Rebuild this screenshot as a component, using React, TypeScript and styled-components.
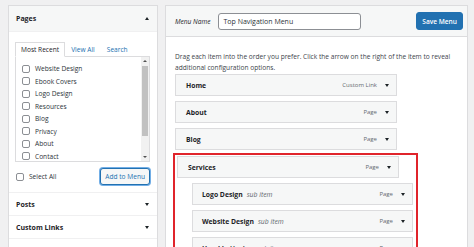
import styled, { createGlobalStyle } from 'styled-components';

const GlobalStyle = createGlobalStyle`
  html, body {
    margin: 0;
    padding: 0;
    background: #f0f0f1;
    font-family: "Open Sans", "Noto Sans", sans-serif;
    color: #1d2327;
  }
  * { box-sizing: border-box; }
`;

const Page = styled.div`
  display: flex;
  gap: 7px;
  padding: 5px 6px 0 8px;
  height: 247px;
  overflow: hidden;
`;

const LeftPanel = styled.div`
  width: 150px;
  flex-shrink: 0;
  background: #fff;
  border: 1px solid #dcdcde;
  border-bottom: none;
`;

const Accordion = styled.div<{ $open?: boolean }>`
  display: flex;
  align-items: center;
  justify-content: space-between;
  height: ${({ $open }) => ($open ? '26px' : '23px')};
  padding: 0 8px 0 7px;
  background: ${({ $open }) => ($open ? '#f6f7f7' : '#fff')};
  border-bottom: 1px solid #f0f0f1;
  font-size: 7px;
  font-weight: 700;
`;

const Caret = styled.span<{ $up?: boolean }>`
  width: 0;
  height: 0;
  border-left: 2.5px solid transparent;
  border-right: 2.5px solid transparent;
  ${({ $up }) =>
    $up ? 'border-bottom: 3px solid #1d2327;' : 'border-top: 3px solid #1d2327;'}
`;

const PagesBody = styled.div`
  padding: 10px 7px 7px 6px;
  border-bottom: 1px solid #f0f0f1;
`;

const Tabs = styled.div`
  display: flex;
  align-items: flex-end;
  height: 15px;
  position: relative;
  z-index: 1;
  margin-bottom: -1px;
`;

const Tab = styled.div<{ $active?: boolean }>`
  height: 15px;
  display: flex;
  align-items: center;
  padding: 0 5px 0 5px;
  font-size: 6.6px;
  color: ${({ $active }) => ($active ? '#1d2327' : '#2271b1')};
  background: ${({ $active }) => ($active ? '#fff' : 'transparent')};
  border: 1px solid ${({ $active }) => ($active ? '#dcdcde' : 'transparent')};
  border-bottom-color: ${({ $active }) => ($active ? '#fff' : 'transparent')};
`;

const ListBox = styled.div`
  display: flex;
  height: 106px;
  border: 1px solid #dcdcde;
`;

const List = styled.div`
  flex: 1;
  padding: 7px 0 0 6px;
  display: flex;
  flex-direction: column;
  gap: 2.7px;
`;

const Check = styled.label`
  display: flex;
  align-items: center;
  gap: 5px;
  height: 10px;
  font-size: 6.6px;
  color: #2c3338;
`;

const Box = styled.span`
  width: 8px;
  height: 8px;
  border: 1px solid #8c8f94;
  border-radius: 2px;
  background: #fff;
  flex-shrink: 0;
`;

const Scrollbar = styled.div`
  width: 8px;
  display: flex;
  flex-direction: column;
  align-items: center;
  background: #f1f1f1;
  padding: 3px 0;
`;

const Arrow = styled.span<{ $up?: boolean }>`
  width: 0;
  height: 0;
  border-left: 2px solid transparent;
  border-right: 2px solid transparent;
  ${({ $up }) =>
    $up ? 'border-bottom: 2px solid #505050;' : 'border-top: 2px solid #505050;'}
`;

const Thumb = styled.div`
  width: 6px;
  height: 70px;
  margin: 4px 0 auto;
  background: #c1c1c1;
`;

const ActionRow = styled.div`
  display: flex;
  align-items: center;
  justify-content: space-between;
  margin-top: 6px;
  padding-left: 1px;
`;

const SecondaryButton = styled.button`
  height: 17px;
  padding: 0 4px;
  font-family: inherit;
  font-size: 6.6px;
  color: #2271b1;
  background: #f6f7f7;
  border: 1px solid #2271b1;
  border-radius: 3px;
  box-shadow: 0 0 0 1px #72aee6;
`;

const RightPanel = styled.div`
  flex: 1;
  background: #fff;
  border: 1px solid #dcdcde;
  border-bottom: none;
`;

const MenuHeader = styled.div`
  height: 31px;
  display: flex;
  align-items: center;
  padding: 0 4px 0 9px;
  background: #f6f7f7;
  border-bottom: 1px solid #dcdcde;
`;

const FieldLabel = styled.span`
  font-size: 6.6px;
  font-style: italic;
  margin-right: 7px;
`;

const TextInput = styled.div`
  width: 143px;
  height: 17px;
  display: flex;
  align-items: center;
  padding: 0 5px;
  font-size: 7px;
  color: #2c3338;
  background: #fff;
  border: 1px solid #8c8f94;
  border-radius: 3px;
`;

const PrimaryButton = styled.button`
  margin-left: auto;
  height: 18px;
  padding: 0 5px;
  font-family: inherit;
  font-size: 6.6px;
  font-weight: 600;
  color: #fff;
  background: #2271b1;
  border: 1px solid #2271b1;
  border-radius: 3px;
`;

const MenuBody = styled.div`
  padding: 14px 8px 0 9px;
`;

const Help = styled.p`
  margin: 0 0 1px;
  font-size: 6.6px;
  line-height: 11px;
  color: #3c434a;
`;

const Items = styled.div`
  display: flex;
  flex-direction: column;
  gap: 5px;
`;

const Item = styled.div<{ $sub?: boolean }>`
  display: flex;
  align-items: center;
  width: ${({ $sub }) => ($sub ? '221px' : '222px')};
  height: 22px;
  flex-shrink: 0;
  margin-left: ${({ $sub }) => ($sub ? '15px' : '0')};
  padding: 0 7px 0 ${({ $sub }) => ($sub ? '9px' : '10px')};
  background: #f6f7f7;
  border: 1px solid #dcdcde;
  font-size: 6.8px;
`;

const Title = styled.span`
  font-weight: 700;
  color: #1d2327;
`;

const SubNote = styled.span`
  margin-left: 4px;
  font-style: italic;
  color: #646970;
`;

const Kind = styled.span`
  margin-left: auto;
  margin-right: 8px;
  font-size: 6px;
  color: #646970;
`;

const Highlight = styled.div`
  display: flex;
  flex-direction: column;
  gap: 5px;
  width: 245px;
  margin: -2px 0 0 -2px;
  padding: 1px 0 8px 2px;
  border: 2px solid #e0242b;
  border-bottom: none;
`;

type MenuItemProps = { title: string; kind: string; sub?: boolean };

function MenuItem({ title, kind, sub }: MenuItemProps) {
  return (
    <Item $sub={sub}>
      <Title>{title}</Title>
      {sub && <SubNote>sub item</SubNote>}
      <Kind>{kind}</Kind>
      <Caret />
    </Item>
  );
}

const pages = [
  'Website Design',
  'Ebook Covers',
  'Logo Design',
  'Resources',
  'Blog',
  'Privacy',
  'About',
  'Contact',
];

export default function App() {
  return (
    <>
      <GlobalStyle />
      <Page>
        <LeftPanel>
          <Accordion $open>
            Pages
            <Caret $up />
          </Accordion>
          <PagesBody>
            <Tabs>
              <Tab $active>Most Recent</Tab>
              <Tab>View All</Tab>
              <Tab>Search</Tab>
            </Tabs>
            <ListBox>
              <List>
                {pages.map((p) => (
                  <Check key={p}>
                    <Box />
                    {p}
                  </Check>
                ))}
              </List>
              <Scrollbar>
                <Arrow $up />
                <Thumb />
                <Arrow />
              </Scrollbar>
            </ListBox>
            <ActionRow>
              <Check>
                <Box />
                Select All
              </Check>
              <SecondaryButton>Add to Menu</SecondaryButton>
            </ActionRow>
          </PagesBody>
          <Accordion>
            Posts
            <Caret />
          </Accordion>
          <Accordion>
            Custom Links
            <Caret />
          </Accordion>
        </LeftPanel>
        <RightPanel>
          <MenuHeader>
            <FieldLabel>Menu Name</FieldLabel>
            <TextInput>Top Navigation Menu</TextInput>
            <PrimaryButton>Save Menu</PrimaryButton>
          </MenuHeader>
          <MenuBody>
            <Help>
              Drag each item into the order you prefer. Click the arrow on the right of the item to reveal
              <br />
              additional configuration options.
            </Help>
            <Items>
              <MenuItem title="Home" kind="Custom Link" />
              <MenuItem title="About" kind="Page" />
              <MenuItem title="Blog" kind="Page" />
              <Highlight>
                <MenuItem title="Services" kind="Page" />
                <MenuItem title="Logo Design" kind="Page" sub />
                <MenuItem title="Website Design" kind="Page" sub />
                <MenuItem title="Hand Lettering" kind="Page" sub />
              </Highlight>
            </Items>
          </MenuBody>
        </RightPanel>
      </Page>
    </>
  );
}
